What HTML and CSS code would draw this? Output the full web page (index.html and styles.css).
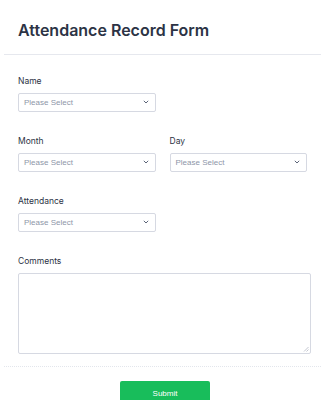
FILE: index.html
```html
<!DOCTYPE html>
<html lang="en">
<head>
<meta charset="utf-8">
<title>Attendance Record Form</title>
<link rel="stylesheet" href="styles.css">
</head>
<body>
<div class="page">
  <div class="header">
    <h1 class="title">Attendance Record Form</h1>
  </div>
  <div class="fields">
    <div class="field half">
      <label class="label">Name</label>
      <div class="select"><span class="ph">Please Select</span><svg class="chev" viewBox="0 0 6 4" width="6" height="4"><path d="M0.8 0.8 L3 3 L5.2 0.8" fill="none" stroke="#5b6478" stroke-width="1"/></svg></div>
    </div>
    <div class="row">
      <div class="field">
        <label class="label">Month</label>
        <div class="select"><span class="ph">Please Select</span><svg class="chev" viewBox="0 0 6 4" width="6" height="4"><path d="M0.8 0.8 L3 3 L5.2 0.8" fill="none" stroke="#5b6478" stroke-width="1"/></svg></div>
      </div>
      <div class="field">
        <label class="label">Day</label>
        <div class="select"><span class="ph">Please Select</span><svg class="chev" viewBox="0 0 6 4" width="6" height="4"><path d="M0.8 0.8 L3 3 L5.2 0.8" fill="none" stroke="#5b6478" stroke-width="1"/></svg></div>
      </div>
    </div>
    <div class="field half">
      <label class="label">Attendance</label>
      <div class="select"><span class="ph">Please Select</span><svg class="chev" viewBox="0 0 6 4" width="6" height="4"><path d="M0.8 0.8 L3 3 L5.2 0.8" fill="none" stroke="#5b6478" stroke-width="1"/></svg></div>
    </div>
    <div class="field wide">
      <label class="label">Comments</label>
      <div class="textarea-wrap">
        <textarea class="textarea"></textarea>
        <svg class="grip" viewBox="0 0 6 6" width="6" height="6"><path d="M5.5 1 L1 5.5 M5.5 3.5 L3.5 5.5" stroke="#b4b8c4" stroke-width="0.8" fill="none"/></svg>
      </div>
    </div>
  </div>
  <div class="footer">
    <button class="submit">Submit</button>
  </div>
</div>
</body>
</html>
```
FILE: styles.css
```css
html, body {
  margin: 0;
  padding: 0;
  background: #ffffff;
}
body {
  font-family: Inter, "Liberation Sans", sans-serif;
  color: #2c3345;
  overflow: hidden;
}
.page {
  padding: 0 4px;
}
.header {
  padding: 19.5px 14px 14.5px;
  border-bottom: 1px solid #e6e8ee;
}
.title {
  margin: 0;
  font-size: 16px;
  line-height: 20px;
  font-weight: 600;
  color: #2c3345;
}
.fields {
  padding: 19.5px 14px 0;
}
.field {
  display: flex;
  flex-direction: column;
  margin-bottom: 22.5px;
}
.half {
  width: 137.5px;
}
.row {
  display: grid;
  grid-template-columns: 1fr 1fr;
  column-gap: 14px;
}
.label {
  font-size: 8.5px;
  line-height: 12px;
  font-weight: 400;
  margin-bottom: 6px;
  color: #2c3345;
}
.select {
  box-sizing: border-box;
  height: 19.5px;
  border: 1px solid #d6d9e2;
  border-radius: 2px;
  display: flex;
  align-items: center;
  justify-content: space-between;
  padding: 0 5px 0 5px;
}
.ph {
  font-family: "Liberation Sans", Arial, sans-serif;
  font-size: 8px;
  color: #8e96a8;
}
.chev {
  display: block;
  margin-right: 1px;
}
.wide {
  margin-right: -4px;
  margin-bottom: 0;
}
.textarea-wrap {
  position: relative;
}
.textarea {
  box-sizing: border-box;
  display: block;
  width: 100%;
  height: 81px;
  border: 1px solid #d6d9e2;
  border-radius: 2px;
  margin: 0;
  padding: 4px;
  resize: none;
  font-family: Inter, sans-serif;
  background: #fff;
}
.grip {
  position: absolute;
  right: 2px;
  bottom: 2px;
}
.footer {
  margin-top: 12.5px;
  border-top: 1px dotted #e3e6ec;
  display: flex;
  justify-content: center;
  padding: 14px 0 0 5px;
}
.submit {
  width: 90px;
  height: 24px;
  border: none;
  border-radius: 2px;
  background: #18bd5b;
  color: #ffffff;
  font-family: "Liberation Sans", Arial, sans-serif;
  font-size: 8px;
  font-weight: 400;
  padding: 0;
}
```
